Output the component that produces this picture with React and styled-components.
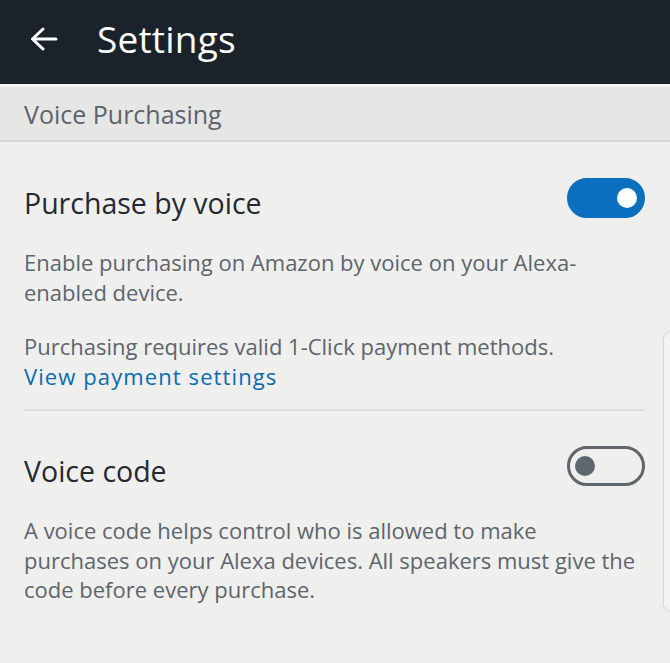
import React from "react";
import styled, { createGlobalStyle } from "styled-components";

const Global = createGlobalStyle`
  html, body { margin: 0; padding: 0; background: #efefed; }
  body { font-family: "Open Sans", "Noto Sans", sans-serif; -webkit-font-smoothing: antialiased; }
  * { box-sizing: border-box; }
`;

const Screen = styled.div`
  position: relative;
  width: 670px;
  height: 663px;
  overflow: hidden;
  background: #efefed;
`;

const AppBar = styled.header`
  height: 87px;
  background: #1c222a;
  border-bottom: 3px solid #f3f3f2;
  display: flex;
  align-items: center;
  padding-left: 30px;
  gap: 39px;
`;

const BackButton = styled.button`
  border: 0;
  background: none;
  padding: 0;
  width: 28px;
  height: 26px;
  display: flex;
  align-items: center;
  justify-content: center;
  color: #ffffff;
  margin-top: -7px;
`;

const Title = styled.h1`
  margin: 0 0 8px;
  color: #ffffff;
  font-size: 37px;
  font-weight: 400;
  letter-spacing: 0.2px;
`;

const SectionHeader = styled.div`
  height: 55px;
  background: #e6e6e5;
  border-bottom: 2px solid #d6d6d5;
  display: flex;
  align-items: center;
  padding-left: 24px;
  color: #5d646b;
  font-size: 25px;
`;

const Content = styled.div`
  padding: 0 25px 0 24px;
`;

const Row = styled.div`
  display: flex;
  align-items: center;
  justify-content: space-between;
  height: 40px;
  margin-top: ${(p) => p.$top}px;
`;

const RowTitle = styled.div`
  color: #232a31;
  font-size: 28.5px;
  line-height: 32px;
  padding-top: 9px;
`;

const Toggle = styled.div`
  position: relative;
  width: 78px;
  height: 40px;
  border-radius: 20px;
  background: ${(p) => (p.$on ? "#0b6fbf" : "transparent")};
  border: 3px solid ${(p) => (p.$on ? "#0b6fbf" : "#5e666e")};
  flex-shrink: 0;
`;

const Knob = styled.span`
  position: absolute;
  top: 7px;
  width: 20px;
  height: 20px;
  border-radius: 50%;
  background: ${(p) => (p.$on ? "#ffffff" : "#5e666e")};
  ${(p) => (p.$on ? "right: 5px;" : "left: 5px;")}
`;

const Paragraph = styled.p`
  margin: ${(p) => p.$top}px 0 0;
  color: #5d656d;
  font-size: 22px;
  line-height: 29.5px;
`;

const Link = styled.a`
  display: block;
  color: #0a6bb0;
  text-decoration: none;
  letter-spacing: 1.1px;
`;

const Divider = styled.hr`
  margin: 18px 0 0;
  border: 0;
  border-top: 2px solid #dcdcda;
`;

const EdgeCard = styled.div`
  position: absolute;
  left: 663px;
  top: 331px;
  width: 24px;
  height: 281px;
  border: 1px solid #d6d6d4;
  border-radius: 8px;
  background: #f2f2f1;
`;

const Switch = ({ on }) => (
  <Toggle $on={on}>
    <Knob $on={on} />
  </Toggle>
);

export default function App() {
  return (
    <Screen>
      <Global />
      <AppBar>
        <BackButton aria-label="Back">
          <svg width="28" height="24" viewBox="0 0 28 24" fill="none">
            <path
              d="M26 12H3M13 2L2.5 12L13 22"
              stroke="#ffffff"
              strokeWidth="3"
              strokeLinecap="round"
              strokeLinejoin="round"
            />
          </svg>
        </BackButton>
        <Title>Settings</Title>
      </AppBar>
      <SectionHeader>Voice Purchasing</SectionHeader>
      <Content>
        <Row $top={36}>
          <RowTitle>Purchase by voice</RowTitle>
          <Switch on />
        </Row>
        <Paragraph $top={30}>
          Enable purchasing on Amazon by voice on your Alexa-
          <br />
          enabled device.
        </Paragraph>
        <Paragraph $top={25}>
          Purchasing requires valid 1-Click payment methods.
          <Link href="#">View payment settings</Link>
        </Paragraph>
        <Divider />
        <Row $top={35}>
          <RowTitle>Voice code</RowTitle>
          <Switch on={false} />
        </Row>
        <Paragraph $top={30}>
          A voice code helps control who is allowed to make
          <br />
          purchases on your Alexa devices. All speakers must give the
          <br />
          code before every purchase.
        </Paragraph>
      </Content>
      <EdgeCard />
    </Screen>
  );
}
